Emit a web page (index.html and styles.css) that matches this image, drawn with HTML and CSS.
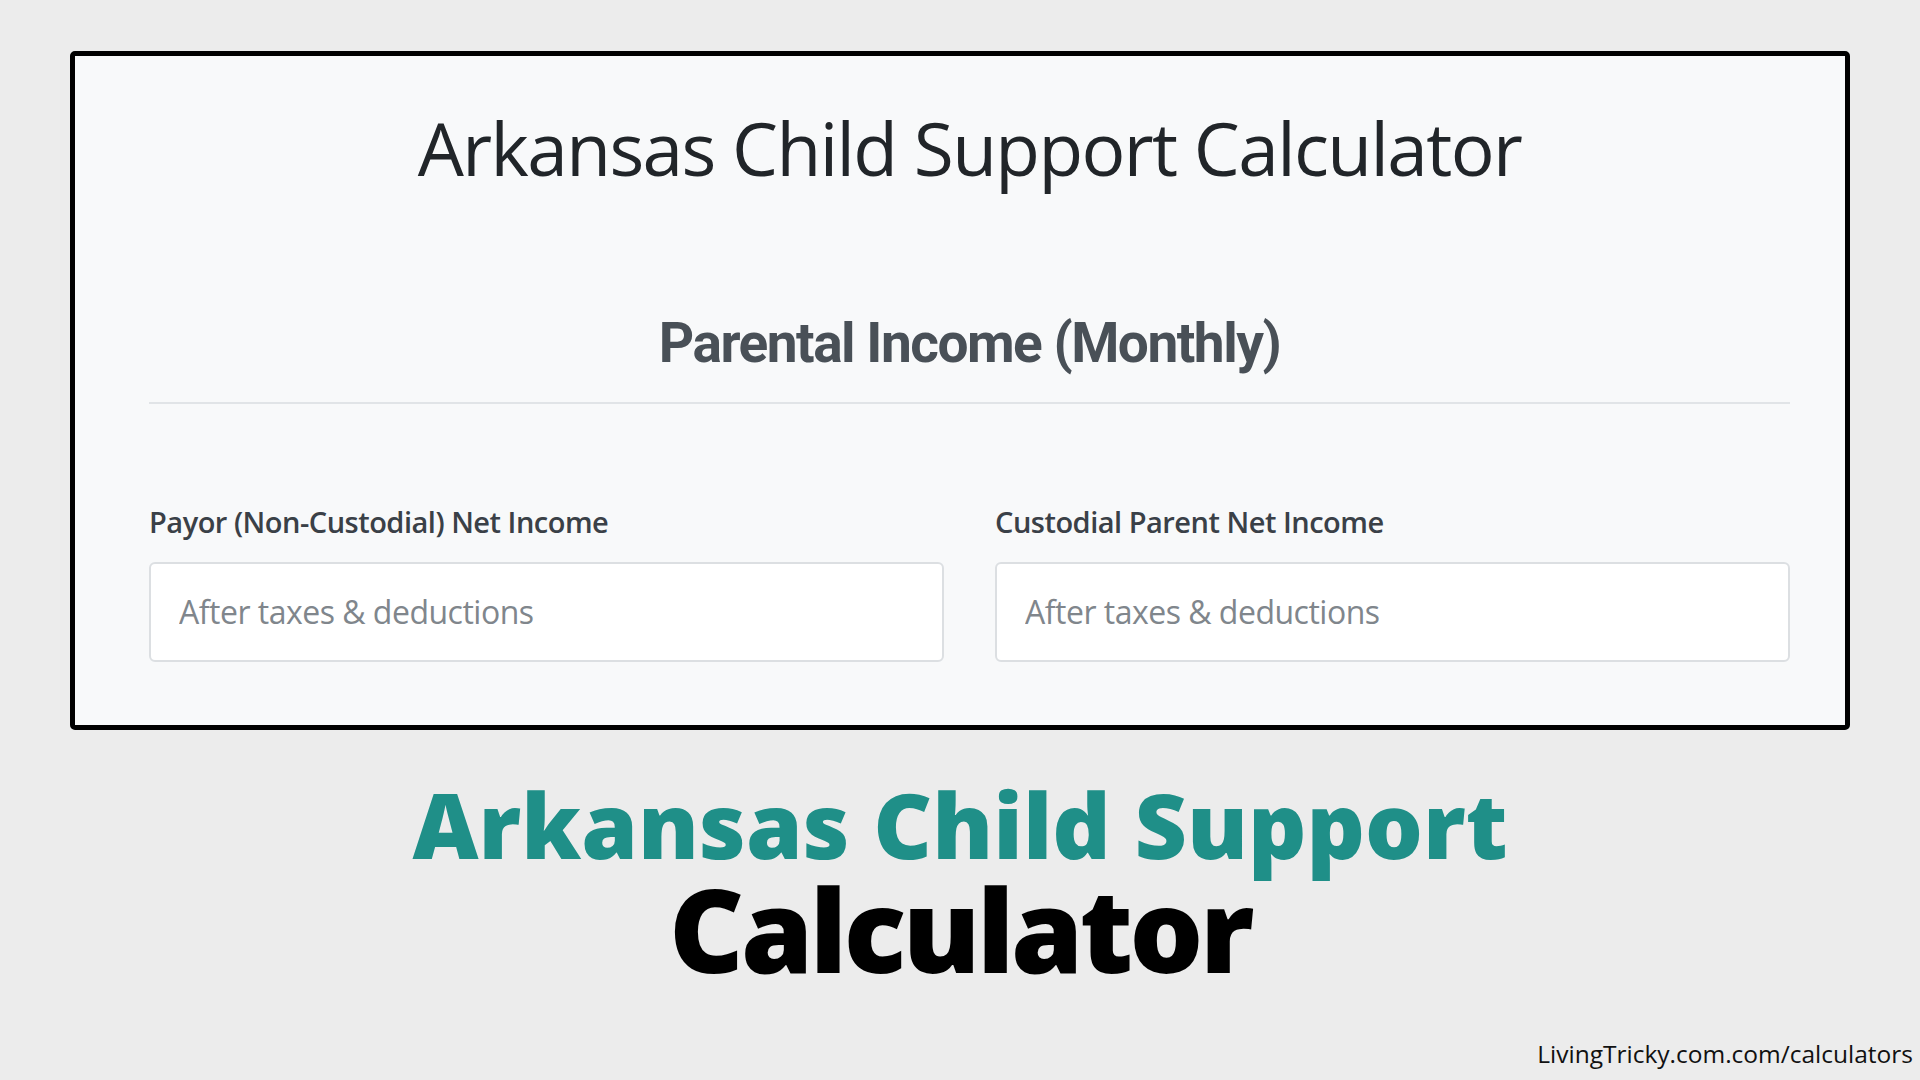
FILE: index.html
```html
<!DOCTYPE html>
<html lang="en">

<head>
  <meta charset="UTF-8" />
  <meta name="viewport" content="width=device-width, initial-scale=1.0" />
  <title>Arkansas Child Support Calculator</title>
  <link rel="stylesheet" href="styles.css">
</head>

<body>
  <div class="card">
    <h1 class="card-title">Arkansas Child Support Calculator</h1>

    <!-- Income Section -->
    <h2 class="section-title">Parental Income (Monthly)</h2>
    <div class="form-row">
      <div class="form-group">
        <label for="payorIncome">Payor (Non-Custodial) Net Income</label>
        <input type="number" id="payorIncome" placeholder="After taxes &amp; deductions">
      </div>
      <div class="form-group">
        <label for="custodialIncome">Custodial Parent Net Income</label>
        <input type="number" id="custodialIncome" placeholder="After taxes &amp; deductions">
      </div>
    </div>
  </div>

  <!-- Caption -->
  <div class="caption">
    <div class="caption-top">Arkansas Child Support</div>
    <div class="caption-bottom">Calculator</div>
  </div>

  <div class="site-link">LivingTricky.com.com/calculators</div>
</body>

</html>
```

FILE: styles.css
```css
body {
  font-family: "Open Sans", Arial, sans-serif;
  background-color: #ececec;
  margin: 0;
  padding: 0;
  height: 1080px;
  display: flex;
  flex-direction: column;
}

.card {
  margin: 51px 70px 0 70px;
  padding: 48px 55px 0 74px;
  box-sizing: border-box;
  height: 679px;
  background: #f8f9fa;
  border: 5px solid #000;
  border-radius: 5px;
}

.card-title {
  margin: 0;
  font-size: 73px;
  font-weight: 400;
  line-height: 1.2;
  letter-spacing: -1.6px;
  color: #212529;
  text-align: center;
}

.section-title {
  margin: 118px 0 0 0;
  padding-bottom: 26px;
  font-family: Roboto, sans-serif;
  font-size: 55px;
  font-weight: 700;
  line-height: 1.2;
  letter-spacing: -1.5px;
  color: #495057;
  text-align: center;
  border-bottom: 2px solid #e1e4e7;
}

.form-row {
  display: flex;
  gap: 51px;
  margin-top: 98px;
}

.form-group {
  flex: 1;
  display: flex;
  flex-direction: column;
}

.form-group label {
  font-size: 29px;
  font-weight: 600;
  line-height: 40px;
  letter-spacing: -0.5px;
  color: #3a4047;
  margin-bottom: 20px;
}

.form-group input {
  height: 100px;
  box-sizing: border-box;
  padding: 0 28px;
  font-family: "Open Sans", Arial, sans-serif;
  font-size: 32px;
  background: #fff;
  border: 2px solid #dcdfe2;
  border-radius: 6px;
}

.form-group input::placeholder {
  color: #80868c;
  letter-spacing: -0.5px;
}

.caption {
  margin-top: 49px;
  text-align: center;
  font-weight: 800;
}

.caption-top {
  font-size: 91px;
  line-height: 1;
  color: #1f8f88;
}

.caption-bottom {
  font-size: 116px;
  line-height: 1;
  letter-spacing: -3.5px;
  color: #000;
}

.site-link {
  margin-top: auto;
  align-self: flex-end;
  padding: 0 7px 10px 0;
  font-size: 24.5px;
  color: #111;
}
```
